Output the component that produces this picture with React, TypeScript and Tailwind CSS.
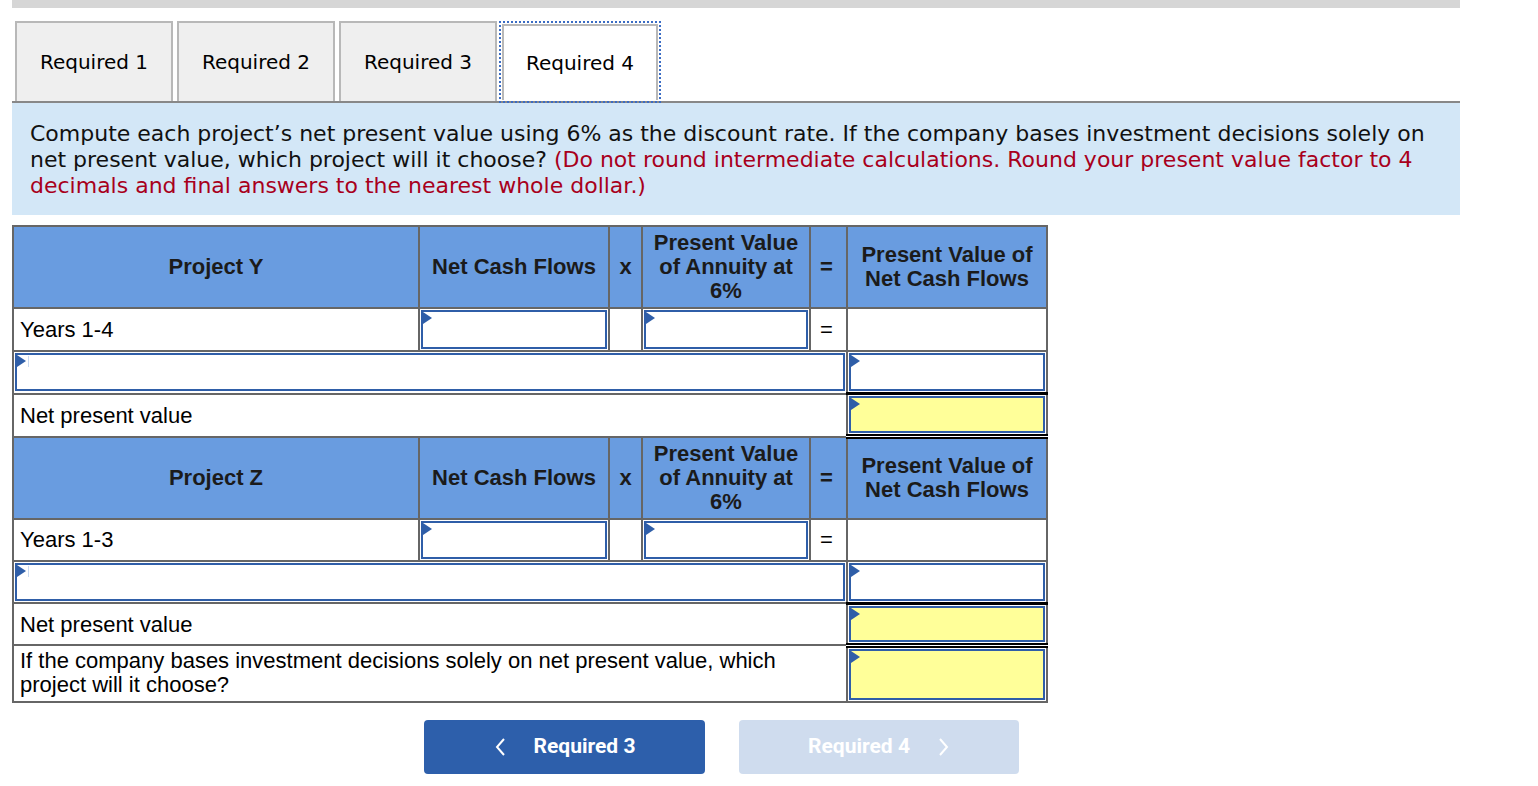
import type { ReactNode } from 'react';

const infoFont = { fontFamily: '"DejaVu Sans", Verdana, sans-serif' };
const tableFont = { fontFamily: '"Liberation Sans", Arial, sans-serif' };

function Marker() {
  return (
    <span className="absolute left-0 top-0 w-0 h-0 border-y-[6px] border-y-transparent border-l-[9px] border-l-[#2f5ea8]" />
  );
}

function Field({ h, yellow, caret }: { h: string; yellow?: boolean; caret?: boolean }) {
  return (
    <div className={`relative border-2 border-[#2f5ea8] ${h} ${yellow ? 'bg-[#ffff99]' : 'bg-white'}`}>
      <Marker />
      {caret && <span className="absolute left-[11px] top-[1px] w-px h-[11px] bg-[#c9d9ef]" />}
    </div>
  );
}

function Header({ title }: { title: string }) {
  return (
    <tr className="bg-[#699ce0] font-bold text-[#1b1b1b] text-center leading-[24px]">
      <td className="h-[82px] border-2 border-[#666]">{title}</td>
      <td className="border-2 border-[#666]">Net Cash Flows</td>
      <td className="border-2 border-[#666]">x</td>
      <td className="border-2 border-[#666]">
        Present Value
        <br />
        of Annuity at
        <br />
        6%
      </td>
      <td className="border-2 border-[#666] pr-1">=</td>
      <td className="border-2 border-[#666]">
        Present Value of
        <br />
        Net Cash Flows
      </td>
    </tr>
  );
}

function Label({ children, span, h }: { children: ReactNode; span?: number; h: string }) {
  return (
    <td colSpan={span} className={`${h} border-2 border-[#666] px-[6px] text-left align-middle`}>
      {children}
    </td>
  );
}

function ProjectBlock({ name, years, rowH, fieldH }: { name: string; years: string; rowH: string; fieldH: string }) {
  return (
    <>
      <Header title={name} />
      <tr>
        <Label h={rowH}>{years}</Label>
        <td className="border-2 border-[#666] p-px">
          <Field h={fieldH} />
        </td>
        <td className="border-2 border-[#666]" />
        <td className="border-2 border-[#666] p-px">
          <Field h={fieldH} />
        </td>
        <td className="border-2 border-[#666] text-center pr-1">=</td>
        <td className="border-2 border-[#666]" />
      </tr>
      <tr>
        <td colSpan={5} className="h-[42px] border-2 border-[#666] p-px">
          <Field h="h-[38px]" caret />
        </td>
        <td className="border-2 border-[#666] border-b-[3px] border-b-black p-px">
          <Field h="h-[38px]" />
        </td>
      </tr>
    </>
  );
}

export default function App() {
  const tabs = ['Required 1', 'Required 2', 'Required 3', 'Required 4'];

  return (
    <div className="min-h-screen bg-white px-3 text-black">
      <div className="h-2 w-[1448px] bg-[#d6d6d6]" />

      <div className="flex items-end gap-[4px] mt-[13px] pl-[3px] w-[1448px] border-b-2 border-[#888]" style={infoFont}>
        {tabs.map((t, i) =>
          i === 3 ? (
            <div
              key={t}
              className="w-[162px] h-[82px] -mb-[2px] -ml-[2px] p-px border-2 border-dotted border-[#3a6cc4]"
            >
              <div className="h-full bg-white border-2 border-b-0 border-[#b8b8b8] flex items-center justify-center text-[20px]">
                {t}
              </div>
            </div>
          ) : (
            <div
              key={t}
              className="w-[158px] h-[80px] bg-[#efefef] border-2 border-b-0 border-[#b8b8b8] flex items-center justify-center text-[20px]"
            >
              {t}
            </div>
          )
        )}
      </div>

      <div className="w-[1448px] bg-[#d3e7f7] px-[18px] pt-[18px] pb-[16px] text-[22px] leading-[26px] text-[#111]" style={infoFont}>
        Compute each project’s net present value using 6% as the discount rate. If the company bases investment decisions solely on
        <br />
        net present value, which project will it choose?{' '}
        <span className="text-[#a8001c]">
          (Do not round intermediate calculations. Round your present value factor to 4
          <br />
          decimals and final answers to the nearest whole dollar.)
        </span>
      </div>

      <table className="mt-[10px] table-fixed border-collapse border-2 border-[#666] w-[1034px] text-[22px]" style={tableFont}>
        <colgroup>
          <col className="w-[406px]" />
          <col className="w-[190px]" />
          <col className="w-[33px]" />
          <col className="w-[168px]" />
          <col className="w-[37px]" />
          <col className="w-[200px]" />
        </colgroup>
        <tbody>
          <ProjectBlock name="Project Y" years="Years 1-4" rowH="h-[43px]" fieldH="h-[39px]" />
          <tr>
            <Label span={5} h="h-[43px]">Net present value</Label>
            <td className="border-2 border-[#666] border-b-[5px] border-b-black border-double p-px">
              <Field h="h-[37px]" yellow />
            </td>
          </tr>
          <ProjectBlock name="Project Z" years="Years 1-3" rowH="h-[42px]" fieldH="h-[38px]" />
          <tr>
            <Label span={5} h="h-[42px]">Net present value</Label>
            <td className="border-2 border-[#666] border-b-[5px] border-b-black border-double p-px">
              <Field h="h-[36px]" yellow />
            </td>
          </tr>
          <tr>
            <Label span={5} h="h-[55px]">
              <div className="leading-[24px]">
                If the company bases investment decisions solely on net present value, which
                <br />
                project will it choose?
              </div>
            </Label>
            <td className="border-2 border-[#666] p-px">
              <Field h="h-[51px]" yellow />
            </td>
          </tr>
        </tbody>
      </table>

      <div className="flex gap-[34px] ml-[412px] mt-[17px]" style={{ fontFamily: 'Roboto, "Liberation Sans", sans-serif' }}>
        <button className="w-[281px] h-[54px] rounded-[4px] bg-[#2d5fab] text-white font-bold text-[21px] flex items-center justify-center gap-[28px]">
          <svg width="12" height="18" viewBox="0 0 12 18" fill="none" stroke="currentColor" strokeWidth="2">
            <path d="M10 1 L3 9 L10 17" />
          </svg>
          <span>Required 3</span>
        </button>
        <button className="w-[280px] h-[54px] rounded-[4px] bg-[#cfdcee] text-white font-bold text-[21px] flex items-center justify-center gap-[28px]">
          <span>Required 4</span>
          <svg width="12" height="18" viewBox="0 0 12 18" fill="none" stroke="currentColor" strokeWidth="2">
            <path d="M2 1 L9 9 L2 17" />
          </svg>
        </button>
      </div>
    </div>
  );
}
